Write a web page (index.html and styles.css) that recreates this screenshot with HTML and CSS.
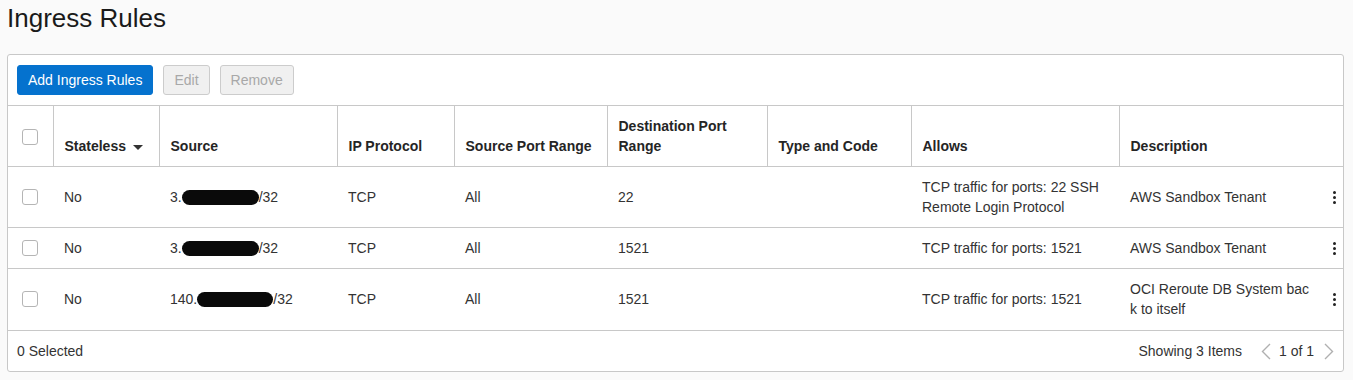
FILE: index.html
```html
<!DOCTYPE html>
<html lang="en">
<head>
    <meta charset="UTF-8">
    <meta name="viewport" content="width=device-width, initial-scale=1.0">
    <title>Ingress Rules</title>
    <link rel="stylesheet" href="styles.css">
</head>
<body>
<h1 class="page-title">Ingress Rules</h1>
<div class="card">
    <div class="toolbar">
        <button class="btn primary">Add Ingress Rules</button>
        <button class="btn" disabled>Edit</button>
        <button class="btn" disabled>Remove</button>
    </div>
    <table class="rules">
        <colgroup>
            <col style="width:45px">
            <col style="width:106px">
            <col style="width:178px">
            <col style="width:117px">
            <col style="width:153px">
            <col style="width:160px">
            <col style="width:144px">
            <col style="width:208px">
            <col>
        </colgroup>
        <thead>
            <tr>
                <th class="check-col"><span class="checkbox"></span></th>
                <th>Stateless <span class="caret"></span></th>
                <th>Source</th>
                <th>IP Protocol</th>
                <th>Source Port Range</th>
                <th>Destination Port<br>Range</th>
                <th>Type and Code</th>
                <th>Allows</th>
                <th>Description</th>
            </tr>
        </thead>
        <tbody>
            <tr>
                <td class="check-col"><span class="checkbox"></span></td>
                <td>No</td>
                <td>3.<span class="redact r1"></span>/32</td>
                <td>TCP</td>
                <td>All</td>
                <td>22</td>
                <td></td>
                <td>TCP traffic for ports: 22 SSH Remote Login Protocol</td>
                <td class="desc-cell"><div class="desc"><span>AWS Sandbox Tenant</span><span class="kebab"><i></i><i></i><i></i></span></div></td>
            </tr>
            <tr>
                <td class="check-col"><span class="checkbox"></span></td>
                <td>No</td>
                <td>3.<span class="redact r1"></span>/32</td>
                <td>TCP</td>
                <td>All</td>
                <td>1521</td>
                <td></td>
                <td>TCP traffic for ports: 1521</td>
                <td class="desc-cell"><div class="desc"><span>AWS Sandbox Tenant</span><span class="kebab"><i></i><i></i><i></i></span></div></td>
            </tr>
            <tr class="last">
                <td class="check-col"><span class="checkbox"></span></td>
                <td>No</td>
                <td>140.<span class="redact r3"></span>/32</td>
                <td>TCP</td>
                <td>All</td>
                <td>1521</td>
                <td></td>
                <td>TCP traffic for ports: 1521</td>
                <td class="desc-cell"><div class="desc"><span class="wrap">OCI Reroute DB System bac k to itself</span><span class="kebab"><i></i><i></i><i></i></span></div></td>
            </tr>
        </tbody>
    </table>
    <div class="footer">
        <span>0 Selected</span>
        <div class="pager">
            <span class="count">Showing 3 Items</span>
            <svg class="chev prev" width="10" height="17" viewBox="0 0 10 17"><path d="M9 1 L1.5 8.5 L9 16" fill="none" stroke="#b0b0b0" stroke-width="1.4"/></svg>
            <span>1 of 1</span>
            <svg class="chev next" width="10" height="17" viewBox="0 0 10 17"><path d="M1 1 L8.5 8.5 L1 16" fill="none" stroke="#b0b0b0" stroke-width="1.4"/></svg>
        </div>
    </div>
</div>
</body>
</html>
```

FILE: styles.css
```css
body {
    margin: 0 9px 0 7px;
    font-family: "Liberation Sans", Arial, sans-serif;
    font-size: 14px;
    color: #333;
    background-color: #fafafa;
}
.page-title {
    margin: 0;
    padding-top: 1px;
    font-size: 26px;
    line-height: 34px;
    font-weight: normal;
    color: #1a1a1a;
}
.card {
    margin-top: 19px;
    background-color: #fff;
    border: 1px solid #c8c8c8;
    border-radius: 3px;
}
.toolbar {
    display: flex;
    gap: 10px;
    padding: 10px 9px;
}
.btn {
    height: 30px;
    padding: 0 10px;
    font-family: inherit;
    font-size: 14px;
    border: 1px solid #ccc;
    border-radius: 3px;
    background-color: #f0f0f0;
    color: #a8a8a8;
}
.btn.primary {
    background-color: #0572ce;
    border-color: #0572ce;
    color: #fff;
}
.rules {
    width: 100%;
    border-collapse: collapse;
    table-layout: fixed;
}
.rules th {
    text-align: left;
    vertical-align: bottom;
    font-weight: bold;
    line-height: 20px;
    padding: 10px 11px;
    color: #252525;
    border-top: 1px solid #c8c8c8;
    border-bottom: 1px solid #c8c8c8;
    border-left: 1px solid #c8c8c8;
}
.rules th:first-child {
    border-left: none;
}
.rules th.check-col {
    vertical-align: middle;
    padding: 2px 0 0 14px;
}
.rules td {
    line-height: 20px;
    padding: 10px 11px;
    border-bottom: 1px solid #c8c8c8;
    vertical-align: middle;
}
.rules tr.last td {
    padding-bottom: 11px;
}
.rules td.check-col {
    padding-left: 14px;
}
.checkbox {
    display: block;
    width: 14px;
    height: 14px;
    border: 1px solid #b5b5b5;
    border-radius: 3px;
    background-color: #fff;
}
.caret {
    display: inline-block;
    margin-left: 3px;
    vertical-align: middle;
    border-left: 5px solid transparent;
    border-right: 5px solid transparent;
    border-top: 5px solid #333;
}
.redact {
    display: inline-block;
    height: 15px;
    vertical-align: -3px;
    background-color: #0a0a0a;
    border-radius: 8px;
}
.redact.r1 {
    width: 77px;
}
.redact.r3 {
    width: 76px;
}
.rules td.desc-cell {
    padding-right: 7px;
}
.desc {
    display: flex;
    align-items: center;
    justify-content: space-between;
}
.wrap {
    width: 182px;
    word-break: break-all;
}
.kebab {
    display: flex;
    flex-direction: column;
    gap: 2px;
}
.kebab i {
    display: block;
    width: 3px;
    height: 3px;
    border-radius: 50%;
    background-color: #222;
}
.footer {
    display: flex;
    justify-content: space-between;
    align-items: center;
    padding: 10px 9px;
    line-height: 20px;
}
.pager {
    display: flex;
    align-items: center;
}
.count {
    margin-right: 19px;
}
.chev.prev {
    margin-right: 8px;
}
.chev.next {
    margin-left: 10px;
}
```
